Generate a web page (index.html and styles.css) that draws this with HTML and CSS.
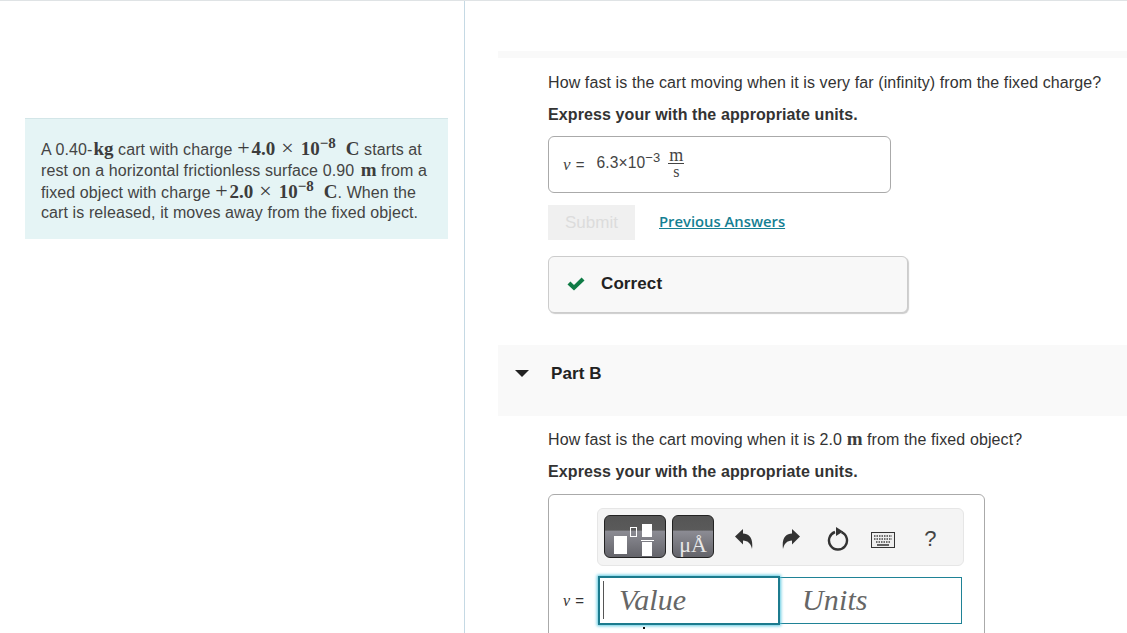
FILE: index.html
```html
<!DOCTYPE html>
<html lang="en">
<head>
  <meta charset="UTF-8" />
  <meta name="viewport" content="width=device-width, initial-scale=1.0"/>
  <title>Part B</title>
  <link rel="stylesheet" href="styles.css">
</head>
<body>
  <div class="page">

    <aside class="left-col">
      <div class="intro">
        <p class="intro-line">A 0.40-<span class="math-b unit-kg">kg</span> cart with charge <span class="math-b"><span class="sym sym-plus">+</span>4.0<span class="sym sym-times">×</span>10<sup>−8</sup><span class="coul">C</span></span> starts at</p>
        <p class="intro-line">rest on a horizontal frictionless surface 0.90 <span class="math-b unit-m">m</span> from a</p>
        <p class="intro-line line-tall">fixed object with charge <span class="math-b"><span class="sym sym-plus">+</span>2.0<span class="sym sym-times">×</span>10<sup>−8</sup><span class="coul">C</span></span>. When the</p>
        <p class="intro-line">cart is released, it moves away from the fixed object.</p>
      </div>
    </aside>

    <main class="right-col">
      <div class="strip"></div>

      <section class="part part-a">
        <p class="question">How fast is the cart moving when it is very far (infinity) from the fixed charge?</p>
        <p class="express">Express your with the appropriate units.</p>
        <div class="answer-box">
          <span class="var">v</span><span class="eq">=</span>
          <span class="answer">6.3×10<sup>−3</sup></span>
          <span class="frac"><span class="num">m</span><span class="den">s</span></span>
        </div>
        <div class="actions">
          <button class="submit" type="button" disabled>Submit</button>
          <a class="prev" href="#">Previous Answers</a>
        </div>
        <div class="correct">
          <svg class="check" width="18" height="14" viewBox="0 0 18 14"><path d="M0.5 7.5 L3.4 4.6 L7 8 L14.6 0.6 L17.5 3.5 L7 13.6 Z" fill="#0f7b45"/></svg>
          <span>Correct</span>
        </div>
      </section>

      <div class="part-head">
        <span class="caret"></span>
        <h2>Part B</h2>
      </div>

      <section class="part part-b">
        <p class="question">How fast is the cart moving when it is 2.0 <span class="math-b">m</span> from the fixed object?</p>
        <p class="express">Express your with the appropriate units.</p>
        <div class="editor">
          <div class="toolbar">
            <button class="tool tool-wide" type="button" aria-label="Templates">
              <svg width="62" height="43" viewBox="0 0 62 43">
                <rect x="10" y="21" width="13" height="18" fill="#fff"/>
                <rect x="26.5" y="12.5" width="6" height="9" fill="none" stroke="#fff" stroke-width="1"/>
                <rect x="38" y="9" width="10" height="13" fill="#fff"/>
                <rect x="37" y="25" width="13" height="1" fill="#fff"/>
                <rect x="38" y="27" width="10" height="14" fill="#fff"/>
              </svg>
            </button>
            <button class="tool tool-unit" type="button" aria-label="Symbols">
              <span class="mu">μÅ</span>
            </button>
            <span class="icon-btn">
              <svg width="18" height="20" viewBox="0 0 18 20"><path d="M0 7.5 L8 0 V4.5 C14 4.5 18.5 9 17 20 C16 15 13 11.5 8 11.5 V15.5 Z" fill="#333"/></svg>
            </span>
            <span class="icon-btn">
              <svg width="18" height="20" viewBox="0 0 18 20"><path d="M18 7.5 L10 0 V4.5 C4 4.5 -0.5 9 1 20 C2 15 5 11.5 10 11.5 V15.5 Z" fill="#333"/></svg>
            </span>
            <span class="icon-btn">
              <svg width="22" height="24" viewBox="0 0 22 24"><path d="M8 5 A9 9 0 1 0 14.5 5.2" fill="none" stroke="#333" stroke-width="2.4"/><path d="M9 0 L16 4.5 L9 9 Z" fill="#333"/></svg>
            </span>
            <span class="icon-btn">
              <svg class="kbd" width="24" height="16" viewBox="0 0 24 16">
                <rect x="0.5" y="0.5" width="23" height="15" fill="#eee" stroke="#333"/>
                <path d="M3 4 H21 M3 7 H21 M5 10 H19" stroke="#444" stroke-width="1.5" stroke-dasharray="1.5 1"/>
                <path d="M6 13 H18" stroke="#333" stroke-width="1.5"/>
              </svg>
            </span>
            <span class="icon-btn help">?</span>
          </div>
          <div class="input-row">
            <span class="var">v</span><span class="eq">=</span>
            <div class="field field-value"><span class="caret-line"></span>Value</div>
            <div class="field field-units">Units</div>
            <span class="dot"></span>
          </div>
        </div>
      </section>
    </main>

  </div>
</body>
</html>
```

FILE: styles.css
```css
html, body {
  height: 633px;
  overflow: hidden;
}

body {
  margin: 0;
  font-family: "Liberation Sans", Arial, sans-serif;
  font-size: 16px;
  letter-spacing: 0.1px;
  color: #333;
  background: white;
}

p {
  margin: 0;
}

.page {
  display: flex;
  height: 633px;
  border-top: 1px solid #dfe3e5;
  box-sizing: border-box;
  overflow: hidden;
}

.left-col {
  width: 465px;
  flex-shrink: 0;
  box-sizing: border-box;
  border-right: 1px solid #c5d9e4;
  padding: 117px 16px 0 25px;
}

.intro {
  background: #e5f4f5;
  border-top: 1px solid #d3e6e8;
  height: 121px;
  box-sizing: border-box;
  padding: 19px 10px 0 16px;
  color: #444;
}

.intro-line {
  height: 21px;
  line-height: 21px;
  white-space: nowrap;
}

.line-tall {
  margin-top: 1px;
}

.math-b {
  font-family: "Liberation Serif", serif;
  font-weight: bold;
  font-size: 19px;
  color: #3c3c3c;
  letter-spacing: 0;
}

.unit-kg {
  margin-left: 1px;
}

.unit-m {
  margin-left: 2px;
}

.sym {
  font-weight: normal;
  font-size: 22px;
  line-height: 0;
}

.sym-plus {
  margin-right: 2px;
}

.sym-times {
  margin: 0 7px 0 6px;
}

.math-b sup {
  font-size: 15px;
  line-height: 0;
  vertical-align: 7px;
}

.coul {
  margin-left: 10px;
}

.right-col {
  flex: 1;
  min-width: 0;
  padding: 50px 0 0 33px;
}

.strip {
  height: 7px;
  background: #f9f9f9;
}

.part {
  padding-left: 50px;
}

.part-a {
  padding-top: 14px;
}

.question {
  line-height: 21px;
}

.express {
  font-weight: bold;
  line-height: 21px;
  margin-top: 11px;
}

.answer-box {
  display: flex;
  align-items: center;
  width: 343px;
  height: 57px;
  box-sizing: border-box;
  margin-top: 11px;
  padding-left: 14px;
  border: 1px solid #aaa;
  border-radius: 6px;
  color: #444;
}

.var {
  font-family: "Liberation Serif", serif;
  font-style: italic;
  font-size: 17px;
}

.eq {
  font-size: 15px;
  margin: 0 12px 0 5px;
}

.answer {
  font-size: 15.6px;
  margin-top: -3px;
}

.answer sup {
  font-size: 13px;
  line-height: 0;
}

.frac {
  display: inline-flex;
  flex-direction: column;
  align-items: center;
  margin: -1px 0 0 8px;
  font-family: "Liberation Serif", serif;
  font-size: 16px;
  line-height: 15px;
}

.num {
  border-bottom: 1px solid #444;
  padding: 0 1px 1px;
  font-size: 18px;
  line-height: 13px;
}

.actions {
  display: flex;
  align-items: center;
  margin-top: 12px;
}

.submit {
  width: 87px;
  height: 35px;
  padding: 0;
  border: none;
  background: #f0f0f0;
  color: #dcdcdc;
  font-family: inherit;
  font-size: 17px;
}

.prev {
  margin: -4px 0 0 24px;
  font-family: "Open Sans", sans-serif;
  font-size: 14.8px;
  font-weight: 600;
  letter-spacing: 0;
  color: #157f93;
}

.correct {
  display: flex;
  align-items: center;
  width: 360px;
  height: 57px;
  box-sizing: border-box;
  margin-top: 16px;
  padding: 0 0 2px 18px;
  background: #f8f8f8;
  border: 1px solid #ccc;
  border-radius: 6px;
  box-shadow: 1px 1px 1px #ccc;
  font-size: 17px;
  font-weight: bold;
  color: #222;
}

.check {
  margin-right: 16px;
}

.part-head {
  display: flex;
  align-items: center;
  height: 71px;
  margin-top: 32px;
  padding: 0 0 14px 17px;
  box-sizing: border-box;
  background: #f9f9f9;
}

.part-head h2 {
  margin: 0 0 0 22px;
  font-size: 17px;
  color: #222;
}

.caret {
  width: 0;
  height: 0;
  border-left: 7px solid transparent;
  border-right: 7px solid transparent;
  border-top: 7px solid #222;
}

.part-b {
  padding-top: 12px;
}

.editor {
  width: 437px;
  height: 200px;
  box-sizing: border-box;
  margin-top: 12px;
  border: 1px solid #aaa;
  border-radius: 6px;
  padding: 13px 0 0 48px;
}

.toolbar {
  display: flex;
  align-items: flex-start;
  width: 367px;
  height: 58px;
  box-sizing: border-box;
  padding: 6px 0 0 6px;
  background: #f4f4f4;
  border: 1px solid #e6e6e6;
  border-radius: 6px;
}

.tool {
  height: 43px;
  padding: 0;
  border: 1px solid #222;
  border-radius: 6px;
  background: linear-gradient(#555 0, #5a5a5a 35%, #8c8c94 36%, #64646a 100%);
  overflow: hidden;
}

.tool svg {
  display: block;
  margin: -1px;
}

.tool-wide {
  width: 62px;
  margin-right: 6px;
}

.tool-unit {
  width: 42px;
  margin-right: 6px;
  display: flex;
  align-items: flex-end;
  justify-content: center;
}

.mu {
  font-family: "Liberation Serif", serif;
  font-size: 22px;
  line-height: 24px;
  letter-spacing: 0;
  color: #e8e8e8;
}

.icon-btn {
  display: flex;
  align-items: center;
  justify-content: center;
  width: 47px;
  height: 48px;
}

.kbd {
  margin: 2px 4px 0 0;
}

.help {
  font-size: 22px;
  color: #444;
  padding: 0 2px 1px 0;
  box-sizing: border-box;
}

.input-row {
  position: relative;
  display: flex;
  align-items: center;
  height: 49px;
  margin: 10px 0 0 -34px;
}

.input-row .var {
  font-size: 16px;
}

.input-row .eq {
  margin: 0 14px 0 5px;
}

.field {
  height: 47px;
  box-sizing: border-box;
  width: 182px;
  font-family: "Liberation Serif", serif;
  font-style: italic;
  font-size: 30px;
  line-height: 43px;
  letter-spacing: 0.1px;
  color: #666;
  border: 1px solid #1f8296;
}

.field-value {
  position: relative;
  height: 49px;
  padding-left: 19px;
  border: 2px solid #1c7b8e;
  box-shadow: 0 0 3px 1px #5cc8e0;
}

.field-units {
  padding-left: 22px;
  border-left: none;
}

.caret-line {
  position: absolute;
  left: 3px;
  top: 3px;
  width: 1px;
  height: 38px;
  background: #555;
}

.dot {
  position: absolute;
  left: 80px;
  top: 51px;
  width: 2px;
  height: 2px;
  background: #111;
}
```
